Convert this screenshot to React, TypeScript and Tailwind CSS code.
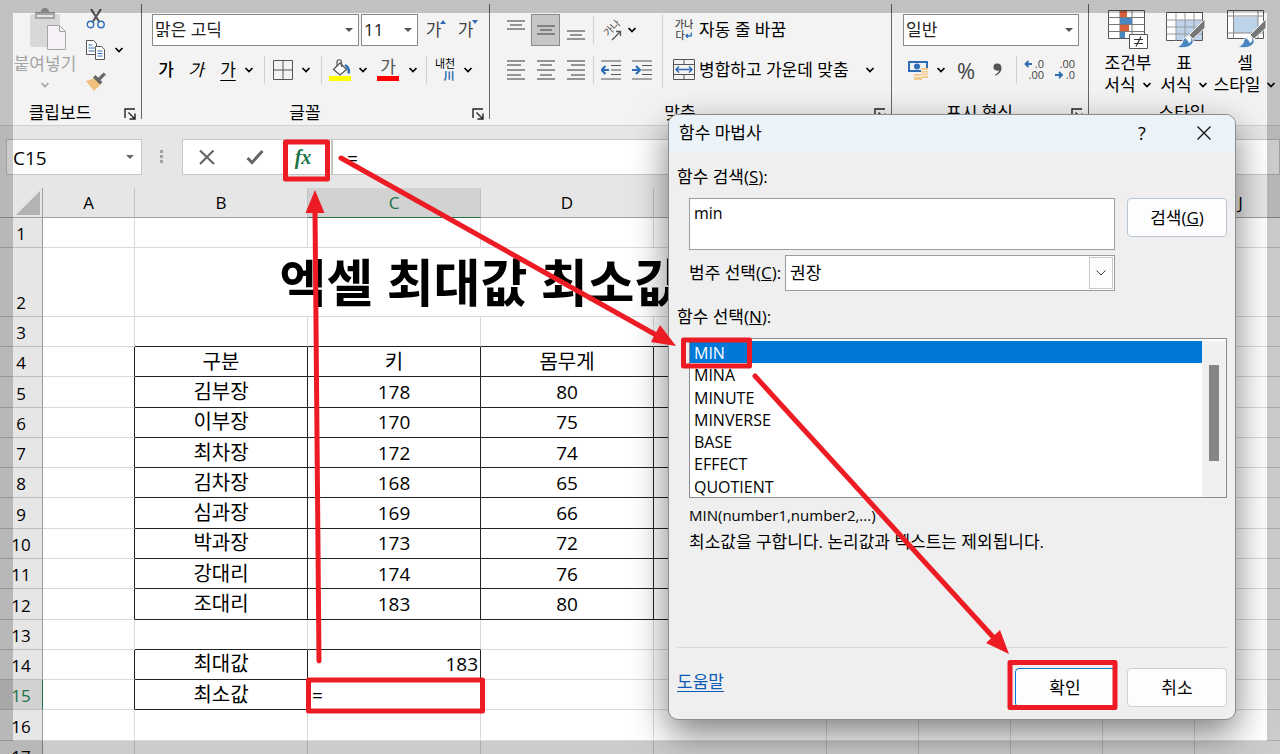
import type { ReactNode } from 'react';
import { clsx } from 'clsx';

const columns = ['A', 'B', 'C', 'D', 'E', 'F', 'G', 'H', 'I', 'J'];
const lastRow = 17;

const cells: Record<string, string> = {
  B4: '구분', C4: '키', D4: '몸무게',
  B5: '김부장', C5: '178', D5: '80',
  B6: '이부장', C6: '170', D6: '75',
  B7: '최차장', C7: '172', D7: '74',
  B8: '김차장', C8: '168', D8: '65',
  B9: '심과장', C9: '169', D9: '66',
  B10: '박과장', C10: '173', D10: '72',
  B11: '강대리', C11: '174', D11: '76',
  B12: '조대리', C12: '183', D12: '80',
  B14: '최대값', C14: '183',
  B15: '최소값', C15: '=',
};

const functions = ['MIN', 'MINA', 'MINUTE', 'MINVERSE', 'BASE', 'EFFECT', 'QUOTIENT'];

// Black outlines: B4:E12 and B14:C15
function hasOutline(col: number, row: number) {
  if (row >= 4 && row <= 12) return col >= 1 && col <= 4;
  if (row === 14 || row === 15) return col === 1 || col === 2;
  return false;
}

function Chevron({ className }: { className?: string }) {
  return (
    <svg viewBox="0 0 10 6" className={clsx('w-2.5 h-1.5 shrink-0', className)} fill="none" stroke="currentColor" strokeWidth="1.7">
      <path d="M1.5 1 5 4.5 8.5 1" />
    </svg>
  );
}

function Sep() {
  return <div className="w-px h-7 shrink-0 bg-[#d0d0d0]" />;
}

function Tool({ label, className, children }: { label: string; className: string; children: ReactNode }) {
  return (
    <button type="button" aria-label={label} className={clsx('h-8 shrink-0 flex items-center justify-center', className)}>
      {children}
    </button>
  );
}

function Combo({ label, value, className }: { label: string; value: string; className: string }) {
  return (
    <div className={clsx('relative shrink-0', className)}>
      <select aria-label={label} className="w-full h-8 pl-0.5 appearance-none rounded-none border border-[#8a8a8a] bg-white text-[17px] text-[#222]">
        <option>{value}</option>
      </select>
      <svg viewBox="0 0 8 4" className="absolute right-1.5 top-3.5 w-2 h-1 pointer-events-none" fill="#555">
        <path d="M0 0h8L4 4z" />
      </svg>
    </div>
  );
}

function Group({ title, className, launcher = true, children }: { title: string; className?: string; launcher?: boolean; children: ReactNode }) {
  return (
    <section className={clsx('relative shrink-0 flex flex-col pt-3.5', className)}>
      <div className="h-[87px]">{children}</div>
      <div className="flex items-center h-6 pr-1.5 gap-1">
        <h2 className="flex-1 text-center text-[17px] leading-6">{title}</h2>
        {launcher && (
          <button type="button" aria-label={`${title} 설정`} className="pt-0.5">
            <svg viewBox="0 0 12 12" className="w-3 h-3" fill="none" stroke="#222" strokeWidth="1.4">
              <path d="M1 10V1h10M4.5 4.5l6 6M11 5.5V11H5.5" />
            </svg>
          </button>
        )}
      </div>
      {launcher && <div className="absolute right-0 top-1 h-[115px] w-px bg-[#666]" />}
    </section>
  );
}

// Horizontal strokes given as [x1, x2, y]
function Lines({ rows }: { rows: number[][] }) {
  return (
    <svg viewBox="0 0 20 20" className="w-5 h-5" stroke="#555" strokeWidth="1.2">
      {rows.map(([x1, x2, y]) => <line key={y} x1={x1} x2={x2} y1={y} y2={y} />)}
    </svg>
  );
}

function Indent({ increase }: { increase?: boolean }) {
  return (
    <svg viewBox="0 0 20 20" className="w-5 h-5" stroke="#555" strokeWidth="1.2" fill="none">
      <path d="M0 1h20M10 5.5h10M10 10h10M10 14.5h10M0 19h20" />
      <path d={increase ? 'M0 10h7M4 6l4 4-4 4' : 'M8 10H1M4.500 6l-4 4 4 4'} stroke="#2e6db4" strokeWidth="2.2" />
    </svg>
  );
}

function ClipboardGroup() {
  return (
    <Group title="클립보드" className="w-[142px]">
      <div className="flex -mt-1.5">
        <button type="button" className="w-[76px] pl-3.5 flex flex-col items-center text-[#a3a3a3]">
          <svg viewBox="0 0 38 42" className="w-[38px] h-[42px] shrink-0 ml-1.5">
            <rect x="1" y="6" width="30" height="33" rx="2" fill="#dad7db" />
            <path d="M6 4h6a4 4 0 0 1 8 0h6v7H6z" fill="#a5a5a5" />
            <rect x="8" y="7" width="16" height="2" fill="#e5e5e5" />
            <path d="M18.500 17.500h12l6 6v18h-18z" fill="#f6f2f8" stroke="#a5a5a5" />
            <path d="M30.500 17.500v6h6" fill="none" stroke="#a5a5a5" />
          </svg>
          <span className="text-[17px] leading-7 whitespace-nowrap">붙여넣기</span>
          <Chevron className="mt-1" />
        </button>
        <div className="pl-2 flex flex-col">
          <Tool label="잘라내기" className="w-6">
            <svg viewBox="0 0 20 20" className="w-5 h-5 -mt-2.5" fill="none">
              <path d="M5 0 13 12.500M15 0 7 12.500" stroke="#555" strokeWidth="2.200" />
              <circle cx="4.500" cy="15.500" r="3.200" stroke="#2e6db4" strokeWidth="1.400" />
              <circle cx="15" cy="15.500" r="3.200" stroke="#2e6db4" strokeWidth="1.400" />
            </svg>
          </Tool>
          <div className="flex items-center -mt-1.5">
            <Tool label="복사" className="w-6">
              <svg viewBox="0 0 20 20" className="w-5 h-5" fill="#fff" stroke="#555">
                <path d="M.5.5h7l3 3v11H.5z" />
                <path d="M2.500 5h4M2.500 8h6M2.500 11h6" stroke="#2e6db4" />
                <path d="M9.500 6.500h6l3 3v10h-9z" />
                <path d="M11.500 11h5M11.500 13.500h5M11.500 16h5" stroke="#2e6db4" />
              </svg>
            </Tool>
            <Chevron className="ml-1.5" />
          </div>
          <Tool label="서식 복사" className="w-6">
            <svg viewBox="0 0 20 20" className="w-5 h-5">
              <path d="M0 9 9 6l6 6-7 7z" fill="#eec07b" />
              <path d="M7 5.500 9.500 3l7 7-2.500 2.500zM12 6l5.500-5.500 2.500 2L14 8.500z" fill="#666" />
            </svg>
          </Tool>
        </div>
      </div>
    </Group>
  );
}

function FontGroup() {
  return (
    <Group title="글꼴" className="w-[348px]">
      <div className="flex pl-2.5">
        <Combo label="글꼴" value="맑은 고딕" className="w-[207px] mr-0.5" />
        <Combo label="글꼴 크기" value="11" className="w-[57px]" />
        <Tool label="글꼴 크기 크게" className="w-8 ml-0.5 text-[17px] text-[#444]">
          가<svg viewBox="0 0 6 4" className="w-1.5 h-1 -ml-px mb-4" fill="#2e6db4"><path d="M0 4h6L3 0z" /></svg>
        </Tool>
        <Tool label="글꼴 크기 작게" className="w-8 text-[17px] text-[#444]">
          가<svg viewBox="0 0 6 4" className="w-1.5 h-1 -ml-px mb-4" fill="#2e6db4"><path d="M0 0h6L3 4z" /></svg>
        </Tool>
      </div>
      <div className="flex items-center pl-2.5 mt-2">
        <Tool label="굵게" className="w-7 text-[17px] font-medium">가</Tool>
        <Tool label="기울임꼴" className="w-8 text-[17px] italic">가</Tool>
        <Tool label="밑줄" className="w-8 text-[17px] underline underline-offset-4">가</Tool>
        <Chevron />
        <div className="w-2.5" />
        <Sep />
        <Tool label="테두리" className="w-9">
          <svg viewBox="0 0 20 20" className="w-5 h-5" fill="none" stroke="#555">
            <path d="M.5.5h19v19H.5zM10 .5v19M.5 10h19" />
          </svg>
        </Tool>
        <Chevron />
        <div className="w-2.5" />
        <Sep />
        <Tool label="채우기 색" className="w-9">
          <svg viewBox="0 0 22 22" className="w-[22px] h-[22px]" fill="none">
            <path d="M4.500 10.500 11 4l6.500 6.500L11 16z" fill="#fff" stroke="#555" strokeWidth="1.300" />
            <path d="M8 7V3a2.200 2.200 0 0 1 4.500 0v5" stroke="#555" strokeWidth="1.200" />
            <path d="M16 6q5 3 3.500 8.500" stroke="#2e6db4" strokeWidth="2.500" />
            <path d="M0 17h22v5H0z" fill="#ffff00" />
          </svg>
        </Tool>
        <Chevron />
        <Tool label="글꼴 색" className="w-10">
          <span className="flex flex-col items-center border-b-[5px] border-[#ff0000] w-[22px] h-[22px] text-[17px] leading-4 text-[#555]">가</span>
        </Tool>
        <Chevron />
        <div className="w-2" />
        <Sep />
        <Tool label="윗주 필드" className="w-9 flex-col text-[11px] leading-3">
          <span className="whitespace-nowrap">내천</span>
          <span className="pl-2 text-[#2e6db4] font-bold">川</span>
        </Tool>
        <Chevron />
      </div>
    </Group>
  );
}

function AlignGroup() {
  return (
    <Group title="맞춤" className="w-[402px]">
      <div className="flex">
        <div className="w-[172px] pl-2.5">
          <div className="flex items-center">
            <Tool label="위쪽 맞춤" className="w-[31px]"><Lines rows={[[1, 19, 1], [4, 16, 5], [1, 19, 9]]} /></Tool>
            <Tool label="가운데 맞춤" className="w-[29px] border border-[#8a8a8a] bg-[#c6c6c6]"><Lines rows={[[1, 19, 6], [4, 16, 10], [1, 19, 14]]} /></Tool>
            <Tool label="아래쪽 맞춤" className="w-[31px]"><Lines rows={[[1, 19, 11], [4, 16, 15], [1, 19, 19]]} /></Tool>
            <div className="w-0.5" />
            <Sep />
            <Tool label="방향" className="w-[33px]">
              <svg viewBox="0 0 22 22" className="w-[22px] h-[22px] overflow-visible" fill="none" stroke="#555" strokeWidth="1.300">
                <text transform="translate(8 18) rotate(-45)" fontSize="10" fill="#444" stroke="none">가나</text>
                <path d="M12 21l8.500-8.500M16 12.500h4.500V17" />
              </svg>
            </Tool>
            <Chevron />
          </div>
          <div className="flex items-center mt-2">
            <Tool label="왼쪽 맞춤" className="w-[31px]"><Lines rows={[[1, 19, 1], [1, 15, 5], [1, 19, 10], [1, 15, 15], [1, 19, 19]]} /></Tool>
            <Tool label="가로 가운데 맞춤" className="w-[29px]"><Lines rows={[[1, 19, 1], [4, 16, 5], [1, 19, 10], [4, 16, 15], [1, 19, 19]]} /></Tool>
            <Tool label="오른쪽 맞춤" className="w-[31px]"><Lines rows={[[1, 19, 1], [5, 19, 5], [1, 19, 10], [5, 19, 15], [1, 19, 19]]} /></Tool>
            <div className="w-0.5" />
            <Sep />
            <Tool label="내어쓰기" className="w-[34px]"><Indent /></Tool>
            <Tool label="들여쓰기" className="w-7"><Indent increase /></Tool>
          </div>
        </div>
        <div className="w-px h-[74px] bg-[#d0d0d0]" />
        <div className="pl-2.5 text-[17px] whitespace-nowrap">
          <button type="button" className="flex items-center gap-1 h-8">
            <span className="w-[22px] text-[10px] leading-[11px] font-medium text-[#444]">가나<br />다<b className="text-[#2e6db4]">↵</b></span>
            자동 줄 바꿈
          </button>
          <button type="button" className="flex items-center gap-1 h-8 mt-2">
            <svg viewBox="0 0 22 22" className="w-[22px] h-[22px]" fill="none" stroke="#555">
              <path d="M.5.5h21v20H.5zM.5 5.500h21M.5 15.500h21M11 .5v5M11 15.500v5" />
              <path d="M3 10.500h16M6 7.500l-3 3 3 3M16 7.500l3 3-3 3" stroke="#2e6db4" strokeWidth="1.500" />
            </svg>
            병합하고 가운데 맞춤
            <Chevron className="ml-3" />
          </button>
        </div>
      </div>
    </Group>
  );
}

function NumberGroup() {
  return (
    <Group title="표시 형식" className="w-[197px]">
      <div className="pl-[11px]">
        <Combo label="표시 형식" value="일반" className="w-[176px]" />
      </div>
      <div className="flex items-center pl-3 mt-2">
        <Tool label="회계 표시 형식" className="w-7">
          <svg viewBox="0 0 22 22" className="w-[22px] h-[22px]">
            <path d="M1 2h20v11H1z" fill="#2e6db4" />
            <path d="M3 4h16v7H3z" fill="#f3f3f3" />
            <circle cx="10" cy="7.500" r="3" fill="#2e6db4" />
            <path d="M14 9h7v10h-7zM7 15h8v6H7z" fill="#f0c98f" />
            <path d="M14 11.500h7M14 14h7M14 16.500h7M7 17.500h8" stroke="#fff" strokeWidth=".8" />
          </svg>
        </Tool>
        <div className="w-1" />
        <Chevron />
        <Tool label="백분율 스타일" className="w-10 text-[22px] text-[#444]">%</Tool>
        <Tool label="쉼표 스타일" className="w-6">
          <svg viewBox="0 0 10 16" className="w-2.5 h-4" fill="#555">
            <path d="M4.500 1.500a3.500 3.500 0 0 0-1 7q2 .5 2.500-.5-.5 3-4 4.500l.5 1.200Q9 11 8.500 5.500 8 1.700 4.500 1.500z" />
          </svg>
        </Tool>
        <div className="w-1.5" />
        <Sep />
        <Tool label="자릿수 늘림" className="w-[34px] flex-col text-[11px] leading-[11px] text-[#444]">
          <svg viewBox="0 0 20 22" className="w-5 h-[22px] overflow-visible" fill="#444">
            <text x="20" y="9" textAnchor="end" fontSize="11">.0</text>
            <text x="20" y="20" textAnchor="end" fontSize="11">.00</text>
            <path d="M8 5H1.500M4.500 2l-3 3 3 3" fill="none" stroke="#2e6db4" strokeWidth="1.800" />
          </svg>
        </Tool>
        <Tool label="자릿수 줄임" className="w-7">
          <svg viewBox="0 0 20 22" className="w-5 h-[22px] overflow-visible" fill="#444">
            <text x="20" y="9" textAnchor="end" fontSize="11">.00</text>
            <text x="20" y="20" textAnchor="end" fontSize="11">.0</text>
            <path d="M0 16h6.500M4 13l3 3-3 3" fill="none" stroke="#2e6db4" strokeWidth="1.800" />
          </svg>
        </Tool>
      </div>
    </Group>
  );
}

function Brush() {
  return (
    <g>
      <path d="M39 11v9L27 31l-4-4z" fill="#777" stroke="#f3f3f3" />
      <path d="M10 39q6-1 7-7 3-5 8-3 5 5-1 9-5 3-14 1z" fill="#4a86c0" stroke="#f3f3f3" />
      <path d="M19 30q4-3 6 0 1 4-2 5-1-3-4-5z" fill="#fff" />
    </g>
  );
}

function StylesGroup() {
  return (
    <Group title="스타일" launcher={false} className="min-w-[192px] flex-1">
      <div className="flex pl-[11px] -mt-1.5 text-[17px] leading-[22px] whitespace-nowrap">
        <button type="button" className="w-14 shrink-0 flex flex-col items-center">
          <svg viewBox="0 0 40 42" className="w-10 h-[42px]">
            <path d="M.5 2.500h36v28H.5z" fill="#fff" stroke="#555" />
            <path d="M.5 9.500h36M.5 16.500h36M.5 23.500h36M12 2.500v28M24 2.500v28" stroke="#777" />
            <path d="M12 3h7v6h-7zM12 17h9v6h-9z" fill="#d9603b" />
            <path d="M12 10h12v6H12zM12 24h5v6h-5z" fill="#4a86c0" />
            <path d="M21.500 26.500h18v14h-18z" fill="#fff" stroke="#555" />
            <path d="M26 31.500h9M26 35.500h9M33 28.500l-5 10" stroke="#333" strokeWidth="1.200" />
          </svg>
          <span className="mt-0.5">조건부</span>
          <span className="flex items-center gap-1.5">서식 <Chevron /></span>
        </button>
        <button type="button" className="w-14 shrink-0 flex flex-col items-center">
          <svg viewBox="0 0 40 42" className="w-10 h-[42px] ml-1">
            <path d="M.5 4.500h36v28H.5z" fill="#fff" stroke="#555" />
            <path d="M10 12h26v20H10z" fill="#bcd3ea" />
            <path d="M.5 12h36M.5 19h36M.5 26h36M10 5v28M19 5v28M28 5v28" stroke="#999" />
            <Brush />
          </svg>
          <span className="mt-0.5">표</span>
          <span className="flex items-center gap-1.5">서식 <Chevron /></span>
        </button>
        <button type="button" className="w-[66px] shrink-0 flex flex-col items-center">
          <svg viewBox="0 0 40 42" className="w-10 h-[42px] ml-1">
            <path d="M.5 2.500h36v28H.5z" fill="#fff" stroke="#555" />
            <path d="M7 9h24v16H7z" fill="#bcd3ea" />
            <path d="M.5 8h36M.5 25h36M6.500 2.500v28M31 2.500v28" stroke="#888" />
            <Brush />
          </svg>
          <span className="mt-0.5">셀</span>
          <span className="flex items-center gap-1.5">스타일 <Chevron /></span>
        </button>
      </div>
    </Group>
  );
}

function FormulaBar() {
  return (
    <div className="flex shrink-0 h-[63px] pt-[13px] pl-1.5 border-t border-[#d0d0d0] bg-[#e6e6e6]">
      <div className="relative w-[136px] h-9 shrink-0">
        <input aria-label="이름 상자" defaultValue="C15" className="w-full h-9 pt-0.5 pl-1.5 border border-[#c6c6c6] bg-white text-[19px]" />
        <svg viewBox="0 0 8 4" className="absolute right-2 top-4 w-2 h-1" fill="#666"><path d="M0 0h8L4 4z" /></svg>
      </div>
      <svg viewBox="0 0 4 16" className="w-1 h-4 mx-[18px] mt-2.5 shrink-0" fill="#a0a0a0">
        <path d="M0 1h3v3H0zM0 6h3v3H0zM0 11h3v3H0z" />
      </svg>
      <div className="flex items-center w-[150px] h-9 shrink-0 border border-[#c6c6c6] bg-white">
        <button type="button" aria-label="취소" className="w-12 flex justify-center">
          <svg viewBox="0 0 16 16" className="w-4 h-4" stroke="#666" strokeWidth="2.200"><path d="M1 1.500 15 15M14.500 1.500 1 15" /></svg>
        </button>
        <button type="button" aria-label="입력" className="w-12 flex justify-center">
          <svg viewBox="0 0 18 16" className="w-[18px] h-4" fill="none" stroke="#666" strokeWidth="3"><path d="M1.500 9 6 13.500 16.500 2" /></svg>
        </button>
        <button type="button" aria-label="함수 삽입" className="w-12 text-center font-['Liberation_Serif',serif] italic font-bold text-[20px] leading-6 text-[#217346]">
          fx
        </button>
      </div>
      <input aria-label="수식 입력줄" defaultValue="=" className="flex-1 min-w-0 h-9 pt-0.5 pl-3.5 border border-[#c6c6c6] bg-white text-[19px]" />
    </div>
  );
}

function Sheet() {
  return (
    <div className="flex-1 min-h-0 overflow-hidden bg-[#e6e6e6]">
      <table className="table-fixed border-separate border-spacing-0 w-[1287px] h-[583px] bg-white">
        <colgroup>
          <col className="w-[43px]" />
          {columns.map((c, i) => <col key={c} className={i >= 1 && i <= 4 ? 'w-[173px]' : 'w-[92px]'} />)}
        </colgroup>
        <thead>
          <tr className="h-[30px] text-[17px] leading-6">
            <th aria-label="모두 선택" className="p-0 border-r border-b border-[#a0a0a0] bg-[#e6e6e6]">
              <svg viewBox="0 0 24 24" className="w-6 h-6 ml-auto mr-0.5" fill="#b3b3b3"><path d="M24 0v24H0z" /></svg>
            </th>
            {columns.map(c => (
              <th
                key={c}
                scope="col"
                className={clsx('p-0 font-normal border-r border-b border-r-[#c2c2c2]', c === 'C' ? 'bg-[#d2d2d2] text-[#217346] border-b-[#217346]' : 'bg-[#e6e6e6] border-b-[#a0a0a0]')}
              >
                {c}
              </th>
            ))}
          </tr>
        </thead>
        <tbody>
          {Array.from({ length: lastRow }, (_, i) => i + 1).map(row => (
            <tr key={row} className={row === 2 ? 'h-[68px]' : 'h-[30px]'}>
              <th
                scope="row"
                className={clsx('p-0 align-bottom font-normal text-[17px] leading-[26px] border-r border-b border-b-[#bdbdbd]', row === 15 ? 'bg-[#d2d2d2] text-[#217346] border-r-[#217346]' : 'bg-[#e6e6e6] border-r-[#999]')}
              >
                {row}
              </th>
              {columns.map((c, col) => {
                if (row === 2 && col > 1 && col < 5) return null;
                const merged = row === 2 && col === 1;
                const text = cells[c + row];
                return (
                  <td
                    key={c}
                    colSpan={merged ? 4 : 1}
                    className={clsx(
                      'p-0 border-r border-b whitespace-nowrap leading-7',
                      hasOutline(col, row) || hasOutline(col + 1, row) ? 'border-r-[#222]' : 'border-r-[#d9d9d9]',
                      hasOutline(col, row) || hasOutline(col, row + 1) ? 'border-b-[#222]' : 'border-b-[#d9d9d9]',
                      row === 14 && col === 2 ? 'text-right pr-0.5' : row === 15 && col === 2 ? 'pl-1' : 'text-center',
                      col === 1 || row === 4 ? 'text-[20px]' : 'text-[19px]',
                    )}
                  >
                    {merged ? <h1 className="text-[51px] leading-[60px] font-bold">엑셀 최대값 최소값</h1> : text}
                  </td>
                );
              })}
            </tr>
          ))}
        </tbody>
      </table>
    </div>
  );
}

function FunctionWizard() {
  const button = 'w-[100px] h-[39px] shrink-0 rounded border bg-[#fdfdfd]';
  return (
    <div
      role="dialog"
      aria-labelledby="wizard-title"
      className="absolute left-[668px] top-[114px] w-[568px] h-[606px] flex flex-col overflow-hidden rounded-[10px] border border-[#8c8c8c] bg-[#efefef] text-[17px] leading-6 shadow-[0_14px_36px_rgba(0,0,0,0.5)]"
    >
      <header className="flex items-center h-[38px] shrink-0 pl-2.5 pb-0.5 bg-[#ebf3f8]">
        <h2 id="wizard-title" className="flex-1">함수 마법사</h2>
        <button type="button" aria-label="도움말" className="w-[62px] text-[18px]">?</button>
        <button type="button" aria-label="닫기" className="w-[62px] flex justify-center">
          <svg viewBox="0 0 14 14" className="w-3.5 h-3.5" stroke="#111" strokeWidth="1.300"><path d="M.5.5l13 13M13.500.5l-13 13" /></svg>
        </button>
      </header>
      <form className="flex-1 flex flex-col pl-2 pr-2 pt-3" onSubmit={e => e.preventDefault()}>
        <label htmlFor="query">함수 검색(<u>S</u>):</label>
        <div className="flex gap-3 mt-[9px] pl-3">
          <textarea id="query" defaultValue="min" className="flex-1 h-[52px] px-1 pt-0.5 resize-none border border-[#999da3] bg-white text-[16px] leading-6" />
          <button type="button" className={clsx(button, 'border-[#b7c6d2]')}>검색(<u>G</u>)</button>
        </div>
        <div className="flex items-center mt-[5px] pl-3 pr-28">
          <label htmlFor="category" className="w-24 whitespace-nowrap">범주 선택(<u>C</u>):</label>
          <div className="relative flex-1">
            <select id="category" className="w-full h-9 pl-1 appearance-none rounded-none border border-[#999da3] bg-white">
              <option>권장</option>
            </select>
            <span className="absolute right-0.5 top-0.5 w-6 h-8 flex items-center justify-center border border-[#c8c8c8] bg-[#fdfdfd] pointer-events-none">
              <svg viewBox="0 0 10 6" className="w-2.5 h-1.5" fill="none" stroke="#444"><path d="M.5.5 5 5 9.500.5" /></svg>
            </span>
          </div>
        </div>
        <p id="list-label" className="mt-3.5">함수 선택(<u>N</u>):</p>
        <div className="flex ml-3 mt-[9px] h-[160px] pt-0.5 border border-[#888d96] bg-white">
          <ul role="listbox" aria-labelledby="list-label" className="flex-1 grid grid-rows-7 text-[16px]">
            {functions.map(name => (
              <li key={name} role="option" aria-selected={name === 'MIN'} className={clsx('pl-1 leading-6', name === 'MIN' && 'bg-[#0078d7] text-white')}>
                {name}
              </li>
            ))}
          </ul>
          <div className="w-6 flex justify-center bg-[#f0f0f0]">
            <div className="w-2.5 h-24 mt-6 bg-[#858585]" />
          </div>
        </div>
        <p className="pl-3 mt-[5px] text-[15px]">MIN(number1,number2,...)</p>
        <p className="pl-3 mt-[3px]">최소값을 구합니다. 논리값과 텍스트는 제외됩니다.</p>
        <footer className="flex items-start mt-auto h-[72px] pt-5 border-t border-[#d9d9d9]">
          <a href="#help" className="mt-0.5 mr-auto text-[#0a5bb5] underline underline-offset-3">도움말</a>
          <button type="submit" className={clsx(button, 'mr-3 border-[#0078d7]')}>확인</button>
          <button type="button" className={clsx(button, 'border-[#d0d0d0]')}>취소</button>
        </footer>
      </form>
    </div>
  );
}

// Red tutorial marks drawn over the window
function Annotations() {
  return (
    <svg viewBox="0 0 1280 754" className="absolute left-0 top-0 w-[1280px] h-[754px] pointer-events-none" fill="none" stroke="#ed1c24" strokeWidth="5" strokeLinecap="round" strokeLinejoin="round">
      <path d="M285.500 142h42v37h-42zM308.500 680h174v31h-174zM683.500 340h66v26h-66zM1010 662.500h105v45H1010z" />
      <path d="M319 661 315 210M341 158 658 336M755 376 994 638" />
      <g fill="#ed1c24" stroke="none">
        <path d="M315 190l9.500 23h-19z" />
        <path d="M676 346l-25-4 9-17z" />
        <path d="M1009 654l-23-11 14-13z" />
      </g>
    </svg>
  );
}

export default function App() {
  return (
    <div className="relative flex flex-col h-screen overflow-hidden bg-[#f3f3f3] text-black font-['Open_Sans','Noto_Sans_CJK_KR',sans-serif]">
      <div className="flex h-[125px] shrink-0">
        <ClipboardGroup />
        <FontGroup />
        <AlignGroup />
        <NumberGroup />
        <StylesGroup />
      </div>
      <FormulaBar />
      <Sheet />
      <div className="absolute inset-0 border-[13px] border-black/20 pointer-events-none" />
      <FunctionWizard />
      <Annotations />
    </div>
  );
}
